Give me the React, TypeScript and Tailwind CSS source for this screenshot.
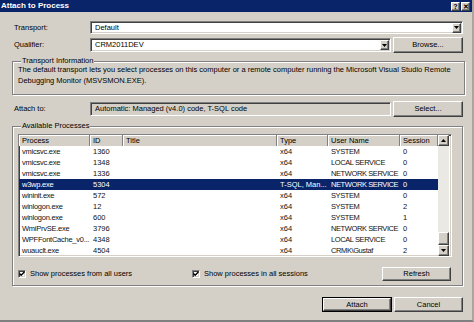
import React from "react";

type Proc = {
    name: string;
    id: string;
    title: string;
    type: string;
    user: string;
    session: string;
    selected?: boolean;
};

const processes: Proc[] = [
    { name: "vmicsvc.exe", id: "1360", title: "", type: "x64", user: "SYSTEM", session: "0" },
    { name: "vmicsvc.exe", id: "1348", title: "", type: "x64", user: "LOCAL SERVICE", session: "0" },
    { name: "vmicsvc.exe", id: "1336", title: "", type: "x64", user: "NETWORK SERVICE", session: "0" },
    { name: "w3wp.exe", id: "5304", title: "", type: "T-SQL, Man...", user: "NETWORK SERVICE", session: "0", selected: true },
    { name: "wininit.exe", id: "572", title: "", type: "x64", user: "SYSTEM", session: "0" },
    { name: "winlogon.exe", id: "12", title: "", type: "x64", user: "SYSTEM", session: "2" },
    { name: "winlogon.exe", id: "600", title: "", type: "x64", user: "SYSTEM", session: "1" },
    { name: "WmiPrvSE.exe", id: "3796", title: "", type: "x64", user: "NETWORK SERVICE", session: "0" },
    { name: "WPFFontCache_v0...", id: "4348", title: "", type: "x64", user: "LOCAL SERVICE", session: "0" },
    { name: "wuauclt.exe", id: "4504", title: "", type: "x64", user: "CRMK\\Gustaf", session: "2" },
];

const columns: { key: keyof Proc; label: string; width: string; cell?: string }[] = [
    { key: "name", label: "Process", width: "w-[71px]", cell: "tracking-[-0.25px]" },
    { key: "id", label: "ID", width: "w-[33px]" },
    { key: "title", label: "Title", width: "w-[154px]" },
    { key: "type", label: "Type", width: "w-[51px]" },
    { key: "user", label: "User Name", width: "w-[72px]", cell: "tracking-[-0.4px]" },
    { key: "session", label: "Session", width: "w-[38px]" },
];

// classic 3d borders
const raised =
    "border border-t-white border-l-white border-b-[#404040] border-r-[#404040] shadow-[inset_-1px_-1px_0_#808080]";
const sunken =
    "border border-t-[#808080] border-l-[#808080] border-b-white border-r-white shadow-[inset_1px_1px_0_#404040,inset_-1px_-1px_0_#d4d0c8]";
const etched = "border border-[#808080] shadow-[1px_1px_0_#fff,inset_1px_1px_0_#fff]";

const Arrow = ({ up = false }: { up?: boolean }) => (
    <svg width="5" height="3" viewBox="0 0 5 3">
        <path d={up ? "M2.5 0 L5 3 L0 3 Z" : "M0 0 L5 0 L2.5 3 Z"} fill="#000" />
    </svg>
);

const DropButton = () => (
    <div className={`${raised} flex h-[10px] w-[9px] shrink-0 items-center justify-center bg-[#d4d0c8]`}>
        <Arrow />
    </div>
);

const Button = ({ label, className = "" }: { label: string; className?: string }) => (
    <div className={`${raised} flex items-center justify-center bg-[#d4d0c8] ${className}`}>{label}</div>
);

const Checkbox = ({ label }: { label: string }) => (
    <div className="flex items-center gap-[4px]">
        <div className={`${sunken} flex h-[8px] w-[8px] items-center justify-center bg-white`}>
            <svg width="6" height="6" viewBox="0 0 6 6">
                <path d="M0.5 2.5 L2.2 4.3 L5.5 0.8" stroke="#000" strokeWidth="1.3" fill="none" />
            </svg>
        </div>
        <span>{label}</span>
    </div>
);

export default function App() {
    return (
        <div className="flex h-[322px] w-[474px] flex-col overflow-hidden border-r-[2px] border-b-[2px] border-r-[#a9a59d] border-b-[#808080] bg-[#d4d0c8] font-['Liberation_Sans',Arial,sans-serif] text-[7.5px] leading-[10px] text-black">
            {/* title bar */}
            <div className="flex h-[12px] shrink-0 items-center justify-between bg-[#0a246a] pl-[1px] pr-[2px]">
                <span className="text-[8px] font-bold text-white">Attach to Process</span>
                <div className="flex gap-[1px]">
                    <div className={`${raised} flex h-[9px] w-[9px] items-center justify-center bg-[#d4d0c8] text-[7px] font-bold leading-none`}>?</div>
                    <div className={`${raised} flex h-[9px] w-[9px] items-center justify-center bg-[#d4d0c8] text-[7px] font-bold leading-none`}>✕</div>
                </div>
            </div>

            <div className="flex flex-col pl-[12px] pr-[7px]">
                {/* transport */}
                <div className="mt-[9px] mr-[2px] flex h-[13px] items-center">
                    <span className="w-[78px] pl-[2px]">Transport:</span>
                    <div className={`${sunken} flex h-[13px] flex-1 items-center justify-between bg-white pl-[4px] pr-[1px]`}>
                        <span>Default</span>
                        <DropButton />
                    </div>
                </div>

                {/* qualifier */}
                <div className="mt-[3px] mr-[2px] flex h-[16px] items-center">
                    <span className="w-[78px] pl-[2px]">Qualifier:</span>
                    <div className={`${sunken} flex h-[14px] flex-1 items-center justify-between bg-white pl-[4px] pr-[1px]`}>
                        <span>CRM2011DEV</span>
                        <DropButton />
                    </div>
                    <Button label="Browse..." className="ml-[2px] h-[16px] w-[70px]" />
                </div>

                {/* transport information */}
                <fieldset className={`${etched} mt-[3px] pb-[8px] pl-[5px]`}>
                    <legend className="ml-[3px] bg-[#d4d0c8] px-[1px] leading-[10px]">Transport Information</legend>
                    <p className="-mt-[2px] whitespace-nowrap leading-[11px]">
                        The default transport lets you select processes on this computer or a remote computer running the Microsoft Visual Studio Remote
                        <br />
                        Debugging Monitor (MSVSMON.EXE).
                    </p>
                </fieldset>

                {/* attach to */}
                <div className="mt-[6px] mr-[2px] flex h-[16px] items-center">
                    <span className="w-[78px] pl-[2px]">Attach to:</span>
                    <div className={`${sunken} flex h-[14px] flex-1 items-center bg-[#d4d0c8] pl-[4px]`}>
                        Automatic: Managed (v4.0) code, T-SQL code
                    </div>
                    <Button label="Select..." className="ml-[2px] h-[16px] w-[70px]" />
                </div>

                {/* available processes */}
                <fieldset className={`${etched} mt-[4px] mr-[2px] pb-[4px] pl-[5px] pr-[10px]`}>
                    <legend className="ml-[3px] bg-[#d4d0c8] px-[1px] leading-[10px]">Available Processes</legend>
                    <div className={`${sunken} mt-[3px] flex w-[434px] bg-white`}>
                        <div className="flex w-[419px] flex-col">
                            <div className="flex h-[11px] bg-[#d4d0c8]">
                                {columns.map((c) => (
                                    <div
                                        key={c.key}
                                        className={`${c.width} shrink-0 border-r border-r-[#808080] pl-[3px] leading-[11px] shadow-[inset_1px_1px_0_#fff]`}
                                    >
                                        {c.label}
                                    </div>
                                ))}
                            </div>
                            {processes.map((p, i) => (
                                <div
                                    key={i}
                                    className={`flex h-[11px] items-center ${p.selected ? "bg-[#0a246a] text-white" : "text-[#111]"}`}
                                >
                                    {columns.map((c) => (
                                        <div
                                            key={c.key}
                                            className={`${c.width} ${c.cell ?? ""} shrink-0 overflow-hidden whitespace-nowrap pl-[3px] leading-[11px]`}
                                        >
                                            {p[c.key]}
                                        </div>
                                    ))}
                                </div>
                            ))}
                        </div>
                        <div className="flex w-[11px] flex-col bg-[#ebe9e4]">
                            <div className={`${raised} flex h-[11px] items-center justify-center bg-[#d4d0c8]`}>
                                <Arrow up />
                            </div>
                            <div className="flex-1" />
                            <div className={`${raised} h-[13px] bg-[#d4d0c8]`} />
                            <div className={`${raised} flex h-[11px] items-center justify-center bg-[#d4d0c8]`}>
                                <Arrow />
                            </div>
                        </div>
                    </div>
                    <div className="mt-[10px] flex h-[14px] items-center">
                        <div className="w-[174px]">
                            <Checkbox label="Show processes from all users" />
                        </div>
                        <div className="flex-1">
                            <Checkbox label="Show processes in all sessions" />
                        </div>
                        <Button label="Refresh" className="mr-[1px] h-[14px] w-[69px]" />
                    </div>
                </fieldset>

                {/* dialog buttons */}
                <div className="mt-[11px] mr-[2px] flex justify-end gap-[2px]">
                    <div className="h-[15px] w-[70px] border border-black">
                        <Button label="Attach" className="h-full w-full" />
                    </div>
                    <Button label="Cancel" className="h-[15px] w-[69px]" />
                </div>
            </div>
        </div>
    );
}
